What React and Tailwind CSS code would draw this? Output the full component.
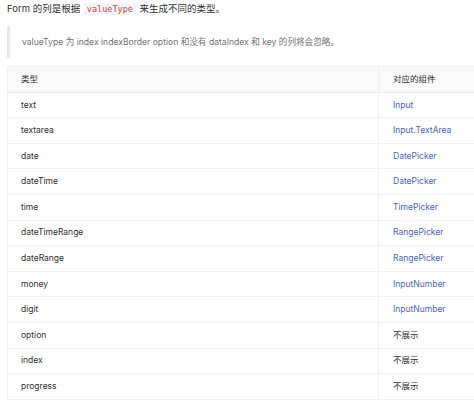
export default function App() {
  const rows = [
    ["text", "Input", true],
    ["textarea", "Input.TextArea", true],
    ["date", "DatePicker", true],
    ["dateTime", "DatePicker", true],
    ["time", "TimePicker", true],
    ["dateTimeRange", "RangePicker", true],
    ["dateRange", "RangePicker", true],
    ["money", "InputNumber", true],
    ["digit", "InputNumber", true],
    ["option", "不展示", false],
    ["index", "不展示", false],
    ["progress", "不展示", false],
  ];
  return (
    <div
      className="w-[474px] h-[405px] overflow-hidden bg-white text-[8.5px] text-[#2f2f2f]"
      style={{ fontFamily: 'Inter, "Noto Sans CJK SC", sans-serif' }}
    >
      <p className="pl-[7px] pt-[0px] leading-[18px] text-[9.5px]">
        Form 的列是根据{" "}
        <code
          className="mx-[1px] px-[3px] py-[1px] rounded-[2px] bg-[#f4f4f4] text-[#c4493f] text-[8.5px]"
          style={{ fontFamily: '"DejaVu Sans Mono", monospace' }}
        >
          valueType
        </code>{" "}
        来生成不同的类型。
      </p>
      <div className="ml-[7px] mt-[8px] border-l-[3px] border-[#e8e8e8] pl-[12px] h-[32px] flex items-center text-[#737373] text-[8.6px]">
        valueType 为 index indexBorder option 和没有 dataIndex 和 key 的列将会忽略。
      </div>
      <div className="ml-[7px] mt-[8px] w-[490px] border-l border-t border-[#eef0f2]">
        <div className="flex h-[25.6px] bg-[#f8f9fa] border-b border-[#eef0f2]">
          <div className="w-[371px] border-r border-[#eef0f2] pl-[13px] flex items-center">类型</div>
          <div className="flex-1 pl-[14px] flex items-center">对应的组件</div>
        </div>
        {rows.map(([a, b, link]) => (
          <div key={a} className="flex h-[25.6px] border-b border-[#eef0f2]">
            <div className="w-[371px] border-r border-[#eef0f2] pl-[13px] flex items-center">{a}</div>
            <div className={`flex-1 pl-[14px] flex items-center ${link ? "text-[#4a63c4]" : "text-[#2f2f2f]"}`}>{b}</div>
          </div>
        ))}
      </div>
    </div>
  );
}
